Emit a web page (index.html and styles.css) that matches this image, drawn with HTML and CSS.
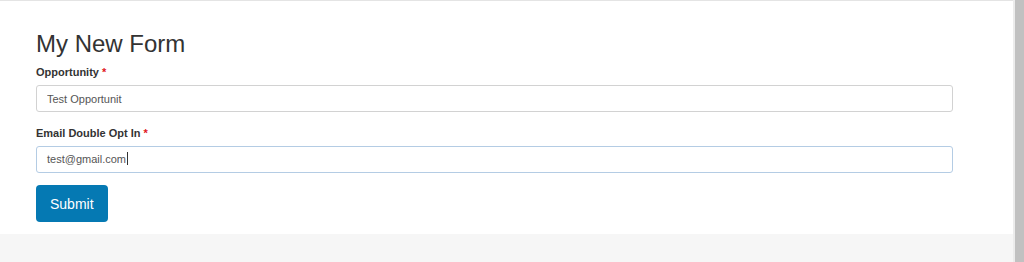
FILE: index.html
```html
<!DOCTYPE html>
<html lang="en">
<head>
  <meta charset="UTF-8" />
  <meta name="viewport" content="width=device-width, initial-scale=1.0"/>
  <title>My New Form</title>
  <link rel="stylesheet" href="styles.css">
</head>
<body>

  <div class="page">
    <div class="main">
      <div class="panel">
        <h1>My New Form</h1>

        <form class="form" onsubmit="return false;">
          <div class="field">
            <label for="opportunity">Opportunity <span class="req">*</span></label>
            <input id="opportunity" type="text" value="Test Opportunit">
          </div>

          <div class="field">
            <label for="email">Email Double Opt In <span class="req">*</span></label>
            <div class="input focus">test@gmail.com<span class="caret"></span></div>
          </div>

          <button type="submit" class="btn">Submit</button>
        </form>
      </div>
      <div class="footer"></div>
    </div>

    <!-- barra de rolagem -->
    <div class="scroll">
      <div class="thumb"></div>
    </div>
  </div>

</body>
</html>
```

FILE: styles.css
```css
body {
  margin: 0;
  font-family: "Liberation Sans", Arial, sans-serif;
  background: #f6f6f6;
}

.page {
  display: flex;
  height: 262px;
}

.main {
  flex: 1;
  display: flex;
  flex-direction: column;
}

.panel {
  background: #fff;
  border-top: 1px solid #e4e4e4;
  padding: 29px 60px 12px 36px;
}

h1 {
  margin: 0;
  font-size: 24px;
  line-height: 28px;
  font-weight: normal;
  color: #333;
}

.field {
  margin-top: 6px;
  margin-bottom: 13px;
}

.field + .field {
  margin-top: 0;
}

.field:nth-of-type(2) {
  margin-bottom: 12px;
}

label {
  display: block;
  font-size: 11px;
  line-height: 17px;
  font-weight: bold;
  color: #333;
  margin-bottom: 4px;
}

.req {
  color: #e0161c;
}

input,
.input {
  display: block;
  box-sizing: border-box;
  width: 100%;
  height: 27px;
  padding: 0 10px;
  border: 1px solid #d2d2d2;
  border-radius: 3px;
  font-family: inherit;
  font-size: 11px;
  color: #555;
  background: #fff;
  outline: none;
}

.input {
  line-height: 25px;
}

.input.focus {
  border-color: #b4cce4;
}

.caret {
  display: inline-block;
  width: 1px;
  height: 13px;
  background: #333;
  vertical-align: -2px;
  margin-left: 1px;
}

.btn {
  display: block;
  height: 37px;
  padding: 0 14px;
  border: none;
  border-radius: 4px;
  background: #0579b3;
  color: #fff;
  font-family: inherit;
  font-size: 14px;
  cursor: pointer;
}

.footer {
  flex: 1;
  background: #f6f6f6;
}

.scroll {
  width: 11px;
  background: #ececec;
  display: flex;
  justify-content: flex-end;
}

.thumb {
  width: 9px;
  background: #c1c1c1;
}
```
